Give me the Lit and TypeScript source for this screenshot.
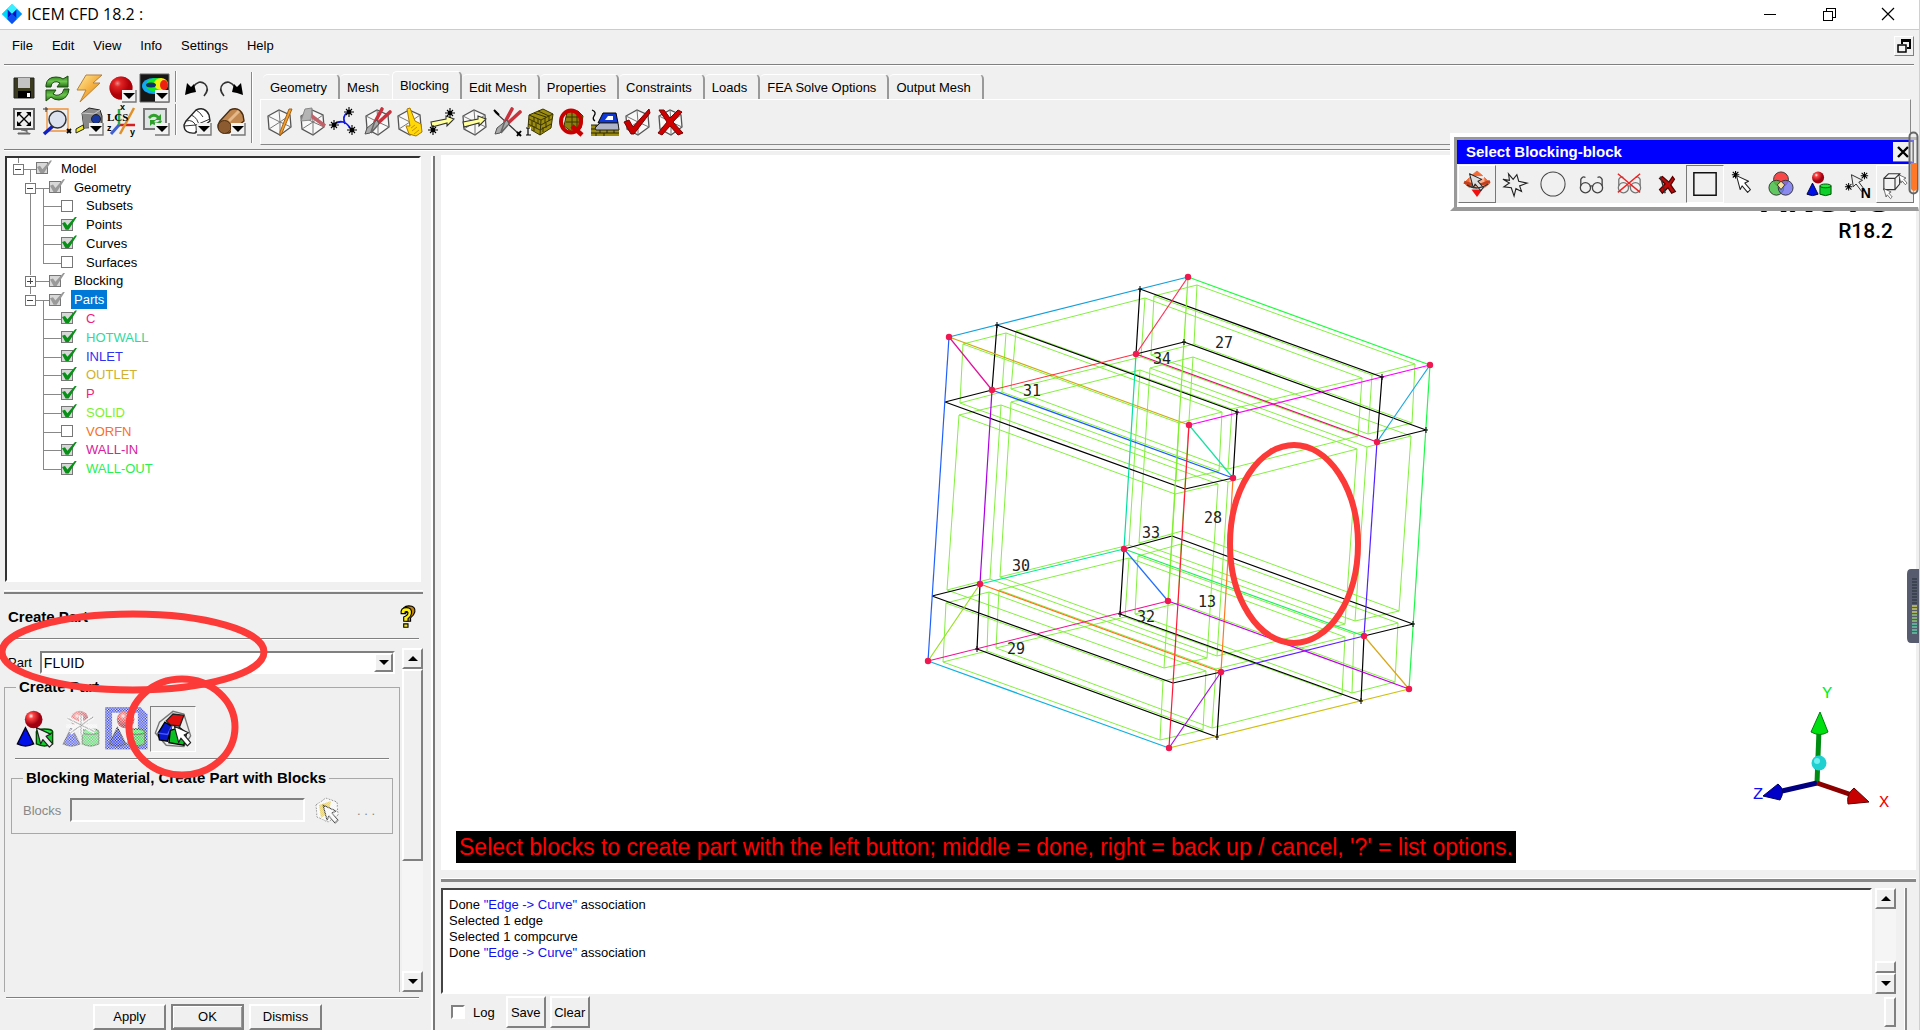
import { LitElement, html, svg, css, nothing, type TemplateResult, type SVGTemplateResult } from "lit";
import { customElement, property, state } from "lit/decorators.js";
import { classMap } from "lit/directives/class-map.js";

type Art = SVGTemplateResult;

/* ---------- shared icon fragments (28 x 28 space) ---------- */

const hexMesh = svg`
  <path d="M3 8 14 2 25 7 26 19 15 27 4 21Z" fill="#f8f8f8" stroke="#555" stroke-width="1.3"/>
  <path d="M3 8 15 14 25 7M14 2 15 14 15 27M4 21 15 14 26 19" fill="none" stroke="#777" stroke-width="1"/>`;

const drop = svg`
  <path d="M14 16H28V28H14Z" fill="#f2f2f2"/>
  <path d="M28 16V28H14" fill="none" stroke="#777" stroke-width="1.4"/>
  <path d="M15 19H27L21 25Z" fill="#000"/>`;

const star = (x: number, y: number) => svg`
  <path d="M${x - 5} ${y}H${x + 5}M${x} ${y - 5}V${y + 5}M${x - 3} ${y - 3}L${x + 3} ${y + 3}M${x + 3} ${y - 3}L${x - 3} ${y + 3}" stroke="#000" stroke-width="1.1"/>
  <circle cx=${x} cy=${y} r="2.2" fill="#000"/>`;

const pointer = (x: number, y: number, fill = "#fff", k = 1) => svg`
  <path transform="translate(${x} ${y}) scale(${k})" d="M0 0 13 6 9 8 15 15 12 18 6 11 4 15Z" fill=${fill} stroke="#222" stroke-width="1.1" stroke-linejoin="round"/>`;

const pliers = svg`
  <path d="M19 1 12 14M27 4 14 16" stroke="#c8323c" stroke-width="3.6" stroke-linecap="round"/>
  <path d="M14 12 4 20 2 26 7 25 16 16Z" fill="#aaa" stroke="#555"/>
  <path d="M12 13 8 24M15 17 8 25" stroke="#666" stroke-width="1.5"/>`;

const yellowArrow = (y: number) => svg`
  <path d="M3 ${y}L18 ${y - 3}V${y - 6}L26 ${y - 3}L19 ${y + 4}V${y + 1}L4 ${y + 5}Z" fill="#ffff9c" stroke="#333" stroke-width="1.1"/>`;

const brick = svg`
  <path d="M3 7 17 1 27 6 25 20 14 27 2 20Z" fill="#9c8c10" stroke="#3a3400"/>
  <path d="M3 7 15 12 27 6M15 12 14 27M3 11 15 17 26 11M2 16 14 22 25 16M8 9V14M12 11V16M6 13V18M10 15V20M8 18V23M19 10V15M23 8V13M20 15V20M17 19V24M8 5 20 9M12 3 23 8" stroke="#3a3400" stroke-width="1" fill="none"/>`;

const shapes = svg`
  <circle cx="13" cy="7" r="6.5" fill="url(#ball)"/>
  <path d="M7 13 1 25Q7 28 13 25Z" fill="#0010e8" stroke="#002"/>
  <path d="M15 16V25Q21 28 27 25V16" fill="#0ccf2a" stroke="#040"/>
  <ellipse cx="21" cy="16" rx="6" ry="2" fill="#18f038" stroke="#040"/>`;

const defs = svg`<defs>
  <radialGradient id="ball" cx="35%" cy="30%"><stop offset="0" stop-color="#fff"/><stop offset=".3" stop-color="#f44"/><stop offset="1" stop-color="#a00010"/></radialGradient>
  <linearGradient id="gold" x2="1" y2="1"><stop offset="0" stop-color="#fff0a0"/><stop offset=".5" stop-color="#f4b040"/><stop offset="1" stop-color="#d08020"/></linearGradient>
  <linearGradient id="leaf" x2="0" y2="1"><stop offset="0" stop-color="#2c7c1c"/><stop offset=".5" stop-color="#6cc84c"/><stop offset="1" stop-color="#246c18"/></linearGradient>
  <pattern id="dots" width="2" height="2" patternUnits="userSpaceOnUse"><path d="M0 0h1v1h-1zM1 1h1v1h-1z" fill="#f0f0f0"/></pattern>
</defs>`;

const glasses = svg`
  <circle cx="8" cy="18" r="5.5"/><circle cx="21" cy="18" r="5.5"/>
  <path d="M13 17Q14.5 15 16 17M3 16 3 9Q5 5 8 7M26 16 26 9Q24 5 21 7"/>`;

const icons: Record<string, Art> = {
  save: svg`<path d="M4 4H24V24H4Z" fill="#3b3b20" stroke="#222"/><path d="M8 4H20V14H8Z" fill="#c4c4c4"/><path d="M8 17H21V24H8Z" fill="#000"/><path d="M17 19H20V23H17Z" fill="#fff"/>`,
  refresh: svg`<path d="M3 11Q4 3 13 3 18 3 20 5L25 2V13H14L17 9Q14 7 11 8 8 9 8 13H3Z" fill="url(#leaf)" stroke="#1c4c10"/><path d="M26 15Q25 25 16 26 11 26 8 23L3 27V16H13L10 20Q13 22 16 21 20 20 21 15Z" fill="url(#leaf)" stroke="#1c4c10"/>`,
  bolt: svg`<path d="M11 1 27 1 18 9 25 9 5 28 11 16 2 16Z" fill="url(#gold)" stroke="#b8813a"/>`,
  sphere: svg`<circle cx="13" cy="14" r="11.5" fill="url(#ball)"/><circle cx="13" cy="14" r="11.5" fill="#c00000" opacity=".45"/>${drop}`,
  contour: svg`<path d="M-1 0H28V28H-1Z" fill="#161616" stroke="#666"/><ellipse cx="13" cy="12" rx="12" ry="8" fill="#10a8f0"/><ellipse cx="16" cy="11" rx="11" ry="7" fill="#10e820"/><ellipse cx="20" cy="10" rx="7" ry="6" fill="#f0f010"/><ellipse cx="23" cy="11" rx="4" ry="5" fill="#f02010"/><ellipse cx="10" cy="11" rx="5" ry="2.5" fill="#08306c"/>${drop}`,
  undo: svg`<path d="M10 13Q16 5 22 10 27 15 21 22" fill="none" stroke="#333" stroke-width="1.6"/><path d="M2 21 4 9 8 13 11 10 13 18 8 19Z" fill="#000"/>`,
  redo: svg`<path d="M18 13Q12 5 6 10 1 15 7 22" fill="none" stroke="#333" stroke-width="1.6"/><path d="M26 21 24 9 20 13 17 10 15 18 20 19Z" fill="#000"/>`,
  fit: svg`<path d="M4 2H24V22H4Z" fill="#eee" stroke="#666" stroke-width="2"/><path d="M11 23H17V26H8V27H20V26" stroke="#666" fill="#777"/><path d="M9 7 19 17M19 7 9 17" stroke="#000" stroke-width="1.4"/><path d="M7 5H12L7 10ZM21 5V10L16 5ZM7 19V14L12 19ZM21 19H16L21 14Z" fill="#000"/>`,
  zoom: svg`<path d="M4 2H25V24H4Z" fill="none" stroke="#f09038" stroke-width="1.3"/><path d="M0 2H5M3 0V5" stroke="#333"/><path d="M10 19 1 27" stroke="#1020c0" stroke-width="3.5"/><circle cx="14.5" cy="12.5" r="8.5" fill="#dde2f0" stroke="#333" stroke-width="1.5"/><path d="M24 22 28 26M28 22 24 26" stroke="#000" stroke-width="1.8"/>`,
  measure: svg`<path d="M7 6 14 1 25 3 27 9V20L9 21Z" fill="#8c8c8c" stroke="#222"/><path d="M7 6 19 7 19 20 9 21Z" fill="#888"/><path d="M7 6 19 7 25 3" fill="none" stroke="#ccc"/><circle cx="21" cy="12" r="4.5" fill="#1838a0" stroke="#222"/><path d="M8 18 9 22 1 26V22Z" fill="#f0e820" stroke="#222"/>${drop}`,
  lcs: svg`<path d="M11 18 27 18" stroke-width="2.5" stroke="#d42020"/><path d="M11 2V18" stroke="#28b040" stroke-width="2.5"/><path d="M11 18 3 27" stroke="#4060d0" stroke-width="3"/><path d="M26 1 12 27" stroke="#e09028" stroke-width="2.5"/><text class="lcs" x="-1" y="14">LCS</text><text class="axis" x="12" y="3">x</text><text class="axis" x="22" y="28">y</text><text class="axis" x="-1" y="24">z</text>`,
  display: svg`<path d="M3 2H25V22H3Z" fill="#dfe4e4" stroke="#777" stroke-width="2"/><path d="M7 10Q12 4 18 9L20 7V13H14L16 11Q12 8 9 12ZM21 14Q18 20 11 17L9 19V13H15L13 15Q16 17 19 13Z" fill="#2ca028"/>${drop}`,
  wireCyl: svg`<path d="M3 14 13 3Q22 -1 26 8L27 14 12 26Q1 27 1 18Z" fill="#fff" stroke="#222" stroke-width="1.4"/><path d="M3 14Q10 12 13 19 14 24 12 26M13 3Q17 5 20 10M1 19 13 18 27 12M8 8Q15 10 17 22" fill="none" stroke="#333"/>${drop}`,
  solidCyl: svg`<path d="M3 14 13 3Q22 -1 26 8L27 14 12 26Q1 27 1 18Z" fill="#c08850" stroke="#4a2c10" stroke-width="1.4"/><ellipse cx="7.5" cy="20" rx="6.5" ry="6.5" fill="#8c5c30" stroke="#4a2c10"/><path d="M12 14 22 4" stroke="#e4b888" stroke-width="3"/>${drop}`,

  createBlock: svg`${hexMesh}<path d="M27 1 17 25 15 28 15 24 24 1Z" fill="#f0a030" stroke="#a86010"/>`,
  splitBlock: svg`${hexMesh}<path d="M11 6 27 18" stroke="#c06068" stroke-width="3.5"/><path d="M7 1 14 0 13 12 3 13Z" fill="#b4b4b4" stroke="#888"/>`,
  mergeVertices: svg`<path d="M17 5Q12 8 15 16M4 16Q14 10 20 20" fill="none" stroke="#1018e0" stroke-width="1.8"/>${star(19, 4)}${star(4, 17)}${star(22, 22)}`,
  editBlock: svg`${hexMesh}${pliers}`,
  associate: svg`${hexMesh}<path d="M12 1 15 0 20 13 26 16 27 24 21 28 14 26 11 18 15 18Z" fill="#ffd808" stroke="#a87800"/><path d="M16 20 20 17M17 23 22 19M19 26 24 22" stroke="#c89000"/>`,
  moveVertex: svg`${yellowArrow(14)}${star(22, 5)}${star(5, 22)}`,
  transform: svg`${hexMesh}${yellowArrow(14)}`,
  editEdge: svg`<path d="M2 4 26 26" stroke="#333" stroke-width="1.2"/>${pliers}<path d="M1 2 6 7M24 24 28 28M28 23 24 28" stroke="#000" stroke-width="2"/>`,
  preMesh: svg`${brick}<path d="M0 19H5V28H0Z" fill="#f0f0f0"/><path d="M0 20H4M2 20V27M0 27H5" stroke="#000" stroke-width="1.2"/>`,
  quality: svg`<path d="M9 4 20 3 25 8 23 20 14 24 6 18Z" fill="#8c8010" stroke="#3a3400"/><path d="M8 9 24 9M8 14 24 14M14 4V22M19 4V20" stroke="#3a3400"/><ellipse cx="13" cy="13.5" rx="10" ry="11" fill="none" stroke="#c80000" stroke-width="4"/><path d="M14 18 24 27" stroke="#c80000" stroke-width="4.5"/>`,
  smooth: svg`<path d="M0 17H28V28H0Z" fill="#9c8c10"/><path d="M0 17H28M0 21H28M0 25H28M5 17V21M12 17V21M19 17V21M9 21V25M16 21V25M23 21V25M5 25V28M13 25V28" stroke="#2a2600"/><path d="M1 2Q6 4 3 8 1 11 4 13" fill="none" stroke="#000" stroke-width="1.3"/><path d="M7 15 12 5H25L27 15Z" fill="#1038d8" stroke="#000"/><path d="M14 12 17 8H22V12Z" fill="#fff"/><path d="M4 20 9 15H27L28 22H5Z" fill="#b0b4c8" stroke="#222"/>`,
  check: svg`${hexMesh}<path d="M1 14 6 12 10 19 26 1 27 5 11 26 8 26Z" fill="#c80000" stroke="#700"/>`,
  remove: svg`${hexMesh}<path d="M3 2 8 2 14 10 22 2 26 4 17 14 27 25 22 27 14 18 6 27 2 25 11 14Z" fill="#d00000" stroke="#700"/>`,

  pan: svg`<path d="M14 0 20 5H8ZM22 7 28 13 22 18ZM6 7V18L0 13Z" fill="#f26a35" stroke="#f26a35"/><path d="M6 8H22V18H6Z" fill="#f8b090"/><path d="M8 20H20L14 28Z" fill="#f01010"/><path d="M0 12Q14 18 28 11" stroke="#c04020" stroke-width="3" fill="none"/>${pointer(6, 3, "#ddd")}<path d="M3 15Q14 22 26 14" stroke="#333" fill="none" stroke-width="1.6"/>`,
  polygon: svg`<path d="M7 3 12 9 16 4 18 11 27 13 19 16 21 22 15 19 13 27 10 18 2 17 8 13 1 9 8 10Z" fill="none" stroke="#222" stroke-width="1.2"/>`,
  circle: svg`<circle cx="14" cy="14" r="13" fill="none" stroke="#444" stroke-width="1.1"/>`,
  all: svg`<g fill="none" stroke="#444" stroke-width="1.4">${glasses}</g>`,
  none: svg`<g fill="none" stroke="#777" stroke-width="1.4">${glasses}</g><path d="M2 3 26 23M26 3 2 23" stroke="#f02020" stroke-width="1.5"/>`,
  cancel: svg`<path d="M9 6 16 12 20 6 22 9 18 15 23 22 19 24 15 18 9 24 6 20 12 14 6 8Z" fill="#c00808" stroke="#500" stroke-width="1.4"/><path d="M7 6 12 24" stroke="#333" stroke-width="1.6"/>`,
  box: svg`<path d="M2 2H26V26H2Z" fill="none" stroke="#111" stroke-width="1.6"/>`,
  single: svg`<path d="M2 4H10M6 0V8M3 1 9 7M9 1 3 7" stroke="#000" stroke-width="1.2"/>${pointer(7, 5)}`,
  parts: svg`<circle cx="14" cy="9" r="8" fill="#f84848" stroke="#333"/><circle cx="9" cy="18" r="8" fill="#48c048" fill-opacity=".85" stroke="#333"/><circle cx="19" cy="18" r="8" fill="#7070f0" fill-opacity=".8" stroke="#333"/><path d="M14 11 18 15 14 20 10 15Z" fill="#f8e0a0" stroke="#333"/>`,
  entity: shapes,
  vertexN: svg`<path d="M18 5H26M22 1V9M19 2 25 8M25 2 19 8M1 17H9M5 13V21M2 14 8 20M8 14 2 20" stroke="#000" stroke-width="1.1"/><path d="M8 4 20 10 16 12 22 20 19 22 13 14 10 17Z" fill="#eee" stroke="#222"/><text class="big-n" x="18" y="29">N</text>`,
  corners: svg`<path d="M2 8H14V20H2ZM2 8 7 3H19L14 8M19 3V14L14 20" fill="#f4f4f4" stroke="#333" stroke-width="1.2"/>${pointer(18, 4, "#fff", 0.6)}${pointer(2, 19, "#fff", 0.6)}`,

  byEntities: svg`${shapes}${pointer(15, 13, "#eee", 0.8)}`,
  byAssembly: svg`<g opacity=".75">${shapes}</g><path d="M4 6 24 16M23 5 6 17M14 4V18M3 12H26" stroke="#fff" stroke-width="3"/><path d="M4 6 24 16M23 5 6 17M14 4V18" stroke="#888" stroke-width=".8"/><path d="M0 0H28V28H0Z" fill="url(#dots)"/>`,
  assembly: svg`<path d="M-2 -2H24L29 3V29H-2Z" fill="#2838e0"/><path d="M3 2H22V24H3Z" fill="#f4f4f4"/><g>${shapes}</g><path d="M-2 -2H29V29H-2Z" fill="url(#dots)"/>`,
  byBlocks: svg`<path d="M1 17 4 9 14 1 22 3 27 19 22 27 9 26Z" fill="#eee" stroke="#777"/><path d="M9 8 14 3 22 4 19 12 12 11Z" fill="#e01010" stroke="#222"/><path d="M3 17 8 9 13 12 10 23 4 22Z" fill="#0818c8" stroke="#000"/><path d="M3 17 10 18 13 12" fill="none" stroke="#4858ff"/><path d="M12 15 19 13 24 17 22 26 11 24Z" fill="#08c020" stroke="#000"/>${pointer(15, 12, "#fff", 0.8)}`,
  pickBlocks: svg`<g opacity=".8"><path d="M3 9 13 2 24 6 25 19 15 26 4 21Z" fill="#fff" stroke="#777" stroke-dasharray="2 1"/><path d="M6 9 18 5 16 16 8 22Z" fill="#e8d060"/>${pointer(10, 9)}</g><path d="M0 0H28V28H0Z" fill="url(#dots)" opacity=".5"/>`,
  help: svg`<path d="M8 9Q7 1 15 1 23 1 22 8 21 12 17 15V19H12V13Q17 11 17 8 16 5 13 6 12 7 13 9Z" fill="#c08010" stroke="#000" stroke-width="1.3"/><path d="M6 10Q5 3 12 3 19 3 18 10 18 13 14 16V19H9V14Q14 12 14 9 13 7 11 8 10 8 11 10Z" fill="#fff010" stroke="#000" stroke-width="1.3"/><path d="M9 22H14V26H9Z" fill="#f0e010" stroke="#000" stroke-width="1.3"/>`,
  logo: svg`<path d="M14 0 28 14 14 28 0 14Z" fill="#00c8ff"/><path d="M14 0 21 7 14 14 7 7Z" fill="#38f0ff"/><path d="M7 7 14 14 7 21 0 14Z" fill="#00d8f8"/><path d="M14 14 21 21 14 28 7 21Z" fill="#1050f0"/><path d="M21 7 28 14 21 21 14 14Z" fill="#0090f8"/><path d="M8 8V20L14 14ZM20 8V20L14 14Z" fill="#0010c8"/>`,
};

const icon = (name: string, size: string) => html`<svg class=${"ico " + size} viewBox="0 0 28 28" aria-hidden="true">${defs}${icons[name]}</svg>`;

/* ---------- wireframe geometry ---------- */

type P = [number, number];
/* Each face is a 4 x 4 lattice of vertices, rows from top to bottom. */
const nearFace: P[][] = [
  [[949, 337], [997, 325], [1140, 289], [1188, 277]],
  [[945, 402], [992, 390], [1136, 354], [1184, 342]],
  [[932, 596], [980, 584], [1124, 549], [1172, 536]],
  [[928, 661], [977, 649], [1120, 614], [1168, 601]],
];
const farFace: P[][] = [
  [[1189, 425], [1237, 412], [1382, 377], [1430, 365]],
  [[1185, 489], [1233, 478], [1377, 442], [1426, 430]],
  [[1173, 683], [1221, 672], [1364, 636], [1413, 624]],
  [[1169, 748], [1217, 737], [1361, 701], [1409, 689]],
];

const seg = (a: P, b: P) => `M${a[0]} ${a[1]}L${b[0]} ${b[1]}`;

/* Outline of every block, pulled in toward the block's own centre. */
function shrunkBlocks(k: number): string {
  let d = "";
  for (let r = 0; r < 3; r++)
    for (let c = 0; c < 3; c++) {
      const ring = (f: P[][]): P[] => [f[r][c], f[r][c + 1], f[r + 1][c + 1], f[r + 1][c]];
      const pts = [...ring(nearFace), ...ring(farFace)];
      const cx = pts.reduce((s, p) => s + p[0], 0) / 8;
      const cy = pts.reduce((s, p) => s + p[1], 0) / 8;
      const q = pts.map(([x, y]): P => [Math.round(cx + k * (x - cx)), Math.round(cy + k * (y - cy))]);
      for (let i = 0; i < 4; i++) {
        const j = (i + 1) % 4;
        d += seg(q[i], q[j]) + seg(q[i + 4], q[j + 4]) + seg(q[i], q[i + 4]);
      }
    }
  return d;
}

const N = nearFace, F = farFace;
const blackEdges = [
  seg(N[0][1], N[1][1]), seg(N[0][2], N[1][2]), seg(N[1][0], N[1][1]), seg(N[1][2], N[1][3]),
  seg(N[2][0], N[2][1]), seg(N[2][2], N[2][3]), seg(N[2][1], N[3][1]), seg(N[2][2], N[3][2]),
  seg(F[0][1], F[1][1]), seg(F[0][2], F[1][2]), seg(F[1][0], F[1][1]), seg(F[1][2], F[1][3]),
  seg(F[2][0], F[2][1]), seg(F[2][2], F[2][3]), seg(F[2][1], F[3][1]), seg(F[2][2], F[3][2]),
  seg(N[0][1], F[0][1]), seg(N[0][2], F[0][2]), seg(N[1][0], F[1][0]), seg(N[1][3], F[1][3]),
  seg(N[2][0], F[2][0]), seg(N[2][3], F[2][3]), seg(N[3][1], F[3][1]), seg(N[3][2], F[3][2]),
].join("");

/* Small cross ticks where a black edge ends on the outer frame. */
const ticks = [N[0][1], N[0][2], N[1][3], N[3][1], N[3][2], F[0][1], F[0][2], F[1][3], F[2][3], F[3][1], F[3][2]]
  .map(([x, y]) => `M${x - 2} ${y}h4M${x} ${y - 3}v6`).join("");

const curves: [P, P, string][] = [
  [N[0][0], N[0][3], "#12a0dc"], [N[0][3], F[0][3], "#18ff38"], [F[0][3], F[0][0], "#ff00ff"], [N[0][0], F[0][0], "#d0a810"],
  [N[0][0], N[1][1], "#e0109c"], [N[0][3], N[1][2], "#ff3058"], [F[0][3], F[1][2], "#18a8e0"], [F[0][0], F[1][1], "#18e0a0"],
  [N[1][1], N[1][2], "#ff3040"], [N[1][2], F[1][2], "#e0106c"], [N[1][1], F[1][1], "#1858ff"],
  [N[0][0], N[3][0], "#2060f8"], [N[1][1], N[2][1], "#a800e0"], [N[1][2], N[2][2], "#00e0a0"], [N[0][3], N[3][3], "#80f030"],
  [F[0][0], F[3][0], "#ff1838"], [F[1][1], F[2][1], "#ff7820"], [F[1][2], F[2][2], "#5020ff"], [F[0][3], F[3][3], "#20f848"],
  [N[2][1], N[2][2], "#08e898"], [N[2][2], F[2][2], "#18f060"], [N[2][1], F[2][1], "#ff7010"], [F[2][1], F[2][2], "#5c20ff"],
  [N[3][0], N[2][1], "#98e020"], [N[3][3], N[2][2], "#2070ff"], [F[3][3], F[2][2], "#d8a818"], [F[3][0], F[2][1], "#a810e8"],
  [N[3][0], N[3][3], "#f01098"], [N[3][3], F[3][3], "#c000e8"], [F[3][3], F[3][0], "#d0c010"], [N[3][0], F[3][0], "#10b0e0"],
];

const points: P[] = [N[0][0], N[0][3], F[0][0], F[0][3], N[3][0], N[3][3], F[3][0], F[3][3], N[1][1], N[1][2], N[2][1], N[2][2], F[1][1], F[1][2], F[2][1], F[2][2]];

const blockLabels: [string, number, number][] = [
  ["27", 1215, 348], ["34", 1153, 364], ["31", 1023, 396], ["33", 1142, 538], ["30", 1012, 571],
  ["28", 1204, 523], ["13", 1198, 607], ["32", 1137, 622], ["29", 1007, 654],
];

/* ---------- tree data ---------- */

interface Node { label: string; level: number; mark: "on" | "off" | "partial"; expander?: "+" | "-"; color?: string; selected?: boolean; last?: boolean }
const nodes: Node[] = [
  { label: "Model", level: 0, mark: "partial", expander: "-" },
  { label: "Geometry", level: 1, mark: "partial", expander: "-" },
  { label: "Subsets", level: 2, mark: "off" },
  { label: "Points", level: 2, mark: "on" },
  { label: "Curves", level: 2, mark: "on" },
  { label: "Surfaces", level: 2, mark: "off", last: true },
  { label: "Blocking", level: 1, mark: "partial", expander: "+" },
  { label: "Parts", level: 1, mark: "partial", expander: "-", selected: true, last: true },
  { label: "C", level: 2, mark: "on", color: "#f0207c" },
  { label: "HOTWALL", level: 2, mark: "on", color: "#30d8a0" },
  { label: "INLET", level: 2, mark: "on", color: "#3030f0" },
  { label: "OUTLET", level: 2, mark: "on", color: "#d0b030" },
  { label: "P", level: 2, mark: "on", color: "#f0207c" },
  { label: "SOLID", level: 2, mark: "on", color: "#80f030" },
  { label: "VORFN", level: 2, mark: "off", color: "#f87028" },
  { label: "WALL-IN", level: 2, mark: "on", color: "#d820a0" },
  { label: "WALL-OUT", level: 2, mark: "on", color: "#28f050", last: true },
];

const base = css`
  *, *::before, *::after { box-sizing: border-box; }
  button, input, select { font: inherit; color: inherit; margin: 0; padding: 0; border-radius: 0; }
  button { background: none; border: 0; }
  .ico { display: block; flex: none; overflow: visible; }
  .s20 { width: 20px; height: 20px; }
  .s24 { width: 24px; height: 24px; }
  .s26 { width: 26px; height: 26px; }
  .s28 { width: 28px; height: 28px; }
  .s38 { width: 38px; height: 38px; }
  .lcs { font: bold 11px "Liberation Serif", serif; }
  .axis { font: bold 9px "Liberation Sans", sans-serif; }
  .big-n { font: bold 15px "Liberation Sans", sans-serif; }
  .raised { background: #f0f0f0; border: 2px solid; border-color: #fff #808080 #808080 #fff; }
  .sunken { border: 2px solid; border-color: #808080 #fff #fff #808080; }
  .rule { flex: none; height: 2px; background: #808080; border-bottom: 1px solid #fff; }
`;

/* Vertical scroll bar: two arrow buttons and a thumb in a track. */
@customElement("scroll-bar")
class ScrollBar extends LitElement {
  @property({ type: Number }) before = 0;
  @property({ type: Number }) thumb = 50;
  @property({ type: Number }) after = 50;
  static styles = [base, css`
    :host { display: flex; flex-direction: column; flex: none; width: 21px; background: #f5f5f5; }
    button { height: 21px; flex: none; display: grid; place-items: center; }
    .up, .down { width: 0; height: 0; border: 5px solid transparent; }
    .up { border-top: 0; border-bottom-color: #000; }
    .down { border-bottom: 0; border-top-color: #000; }
    .track { flex: 1; display: flex; flex-direction: column; min-height: 0; }
    .thumb { min-height: 8px; }
  `];
  render() {
    return html`
      <button class="raised" aria-label="Scroll up"><span class="up"></span></button>
      <div class="track">
        <div style="flex:${this.before}"></div>
        <div class="thumb raised" style="flex:${this.thumb}"></div>
        <div style="flex:${this.after}"></div>
      </div>
      <button class="raised" aria-label="Scroll down"><span class="down"></span></button>`;
  }
}

@customElement("model-tree")
class ModelTree extends LitElement {
  static styles = [base, css`
    :host { display: block; min-height: 0; overflow: hidden; background: #fff; border: 2px solid; border-color: #333 #fff #fff #333; }
    .list { list-style: none; margin: 1px 0 0; padding: 0; height: 319px; display: grid; grid-template-rows: repeat(17, minmax(0, 1fr)); }
    .row { display: flex; align-items: center; min-height: 0; }
    .guides { flex: none; height: 19px; overflow: visible; }
    .label { display: flex; align-items: center; }
    .text { margin-left: 11px; padding: 1px 2px; line-height: 15px; }
    .selected { background: #0078d7; color: #fff; outline: 1px solid #0078d7; }
    .tick { appearance: none; flex: none; width: 12px; height: 12px; border: 1px solid #777; background: #fff; position: relative; }
    .on, .partial { background: #d8d8d8; }
    .on::before, .partial::before {
      content: ""; position: absolute; left: 0; top: -3px; width: 15px; height: 13px; background: #089018;
      clip-path: polygon(0 50%, 20% 42%, 36% 68%, 88% 0, 100% 0, 44% 100%, 24% 100%);
    }
    .partial::before { background: #999; }
  `];
  private guides(n: Node) {
    const width = [29, 42, 54][n.level];
    const ex = [11, 23][n.level] ?? 36;
    const lines = n.level === 0 ? "M11 -2V4M17 10H29M23 10V19"
      : n.level === 1 ? `M29 10H42M23 0V4${n.last ? "" : "M23 16V20"}${n.expander === "-" ? "M36 10V19" : ""}`
      : `M36 -1V${n.last ? 10 : 19}M36 10H54`;
    const inGeometry = n.level === 2 && nodes.indexOf(n) < 6;
    return html`<svg class="guides" width=${width} height="19" viewBox="0 0 ${width} 19" aria-hidden="true" shape-rendering="crispEdges">
      <path d=${lines + (inGeometry ? "M23 -1V20" : "")} stroke="#888" fill="none"></path>
      ${n.expander ? svg`<path d="M${ex - 5} 5h10v10h-10z" fill="#fff" stroke="#777"/><path d="M${ex - 3} 10h6${n.expander === "+" ? "m-3 -3v6" : ""}" stroke="#444"/>` : nothing}
    </svg>`;
  }
  render() {
    return html`<ul class="list">${nodes.map((n) => html`
      <li class="row">${this.guides(n)}
        <label class="label"><input type="checkbox" class="tick ${n.mark}" .checked=${n.mark !== "off"}>
          <span class=${classMap({ text: true, selected: !!n.selected })} style=${n.color ? `color:${n.color}` : nothing}>${n.label}</span></label>
      </li>`)}</ul>`;
  }
}

@customElement("part-form")
class PartForm extends LitElement {
  static styles = [base, css`
    :host { display: flex; flex-direction: column; min-height: 0; padding: 8px 10px 0 4px; }
    .top-edge { flex: none; height: 4px; border-top: 1px solid #fff; border-bottom: 2px solid #808080; background: #f0f0f0; }
    .head { display: flex; align-items: center; justify-content: space-between; height: 44px; padding: 2px 3px 0 4px; }
    .title { margin: 0; font-size: 15px; line-height: 16px; font-weight: bold; }
    .inset-rule { margin: 0 4px; }
    .body { display: flex; flex: 1; min-height: 0; margin-top: 8px; gap: 2px; }
    .content { flex: 1; min-width: 0; display: flex; flex-direction: column; overflow: hidden; }
    .part { display: flex; align-items: center; gap: 8px; margin-top: 3px; padding: 0 5px 0 4px; }
    .combo { display: flex; flex: 1; height: 23px; background: #fff; }
    .select { appearance: none; flex: 1; border: 0; background: #fff; padding-left: 2px; font-size: 14px; outline: 0; }
    .arrow { width: 19px; display: grid; place-items: center; pointer-events: none; }
    .arrow::before { content: ""; border: 5px solid transparent; border-top-color: #000; border-bottom: 0; }
    .group { min-width: 0; border: 1px solid #a8a8a8; margin: 5px 0 0 0; padding: 0; flex: 1; border-bottom: 0; }
    .legend { margin-left: 11px; padding: 0 3px; font-size: 15px; line-height: 16px; font-weight: bold; }
    .modes { display: flex; margin: 11px 0 6px 7px; }
    .mode { width: 46px; height: 46px; display: grid; place-items: center; border: 1px solid transparent; }
    .pressed { border-color: #808080 #fff #fff #808080; }
    .mode-rule { margin: 0 10px; }
    .inner { min-width: 0; border: 1px solid #a8a8a8; margin: 10px 6px 0; padding: 10px 11px 9px; }
    .inner .legend { margin-left: 0; }
    .blocks { display: flex; align-items: center; color: #888; }
    .field { flex: 1; min-width: 0; height: 24px; margin: 0 8px 0 9px; background: #f0f0f0; }
    .dots { margin-left: 16px; width: 24px; text-align: left; }
    .actions { display: flex; gap: 5px; padding: 5px 0 0 89px; flex: none; }
    .foot-rule { margin: 5px 4px 0 2px; }
    .action { width: 73px; height: 26px; font-size: 13px; line-height: 16px; }
    .default { border-color: #808080; box-shadow: inset 1px 1px #fff, inset -1px -1px #999; }
  `];
  render() {
    const modes: [string, string][] = [
      ["byEntities", "Create part by selection"], ["byAssembly", "Create part by coordinates"],
      ["assembly", "Create assembly"], ["byBlocks", "Create part with blocks"],
    ];
    return html`
      <div class="top-edge"></div>
      <div class="head"><h2 class="title">Create Part</h2><button aria-label="Help">${icon("help", "s24")}</button></div>
      <div class="rule inset-rule"></div>
      <div class="body">
        <div class="content">
          <div class="part"><label for="part">Part</label>
            <div class="combo sunken">
              <select class="select" id="part"><option>FLUID</option></select><span class="arrow raised"></span>
            </div>
          </div>
          <fieldset class="group"><legend class="legend">Create Part</legend>
            <div class="modes">${modes.map(([id, name]) => html`
              <button class=${classMap({ mode: true, pressed: id === "byBlocks" })} aria-label=${name}>${icon(id, "s38")}</button>`)}</div>
            <div class="rule mode-rule"></div>
            <fieldset class="inner"><legend class="legend">Blocking Material, Create Part with Blocks</legend>
              <div class="blocks"><label for="blocks">Blocks</label>
                <input class="field sunken" id="blocks" type="text" disabled>
                <button aria-label="Select blocks">${icon("pickBlocks", "s28")}</button><span class="dots">. . .</span>
              </div>
            </fieldset>
          </fieldset>
        </div>
        <scroll-bar .before=${0} .thumb=${190} .after=${112}></scroll-bar>
      </div>
      <div class="rule foot-rule"></div>
      <div class="actions">
        <button class="action raised">Apply</button>
        <button class="action raised default">OK</button>
        <button class="action raised">Dismiss</button>
      </div>`;
  }
}

@customElement("model-view")
class ModelView extends LitElement {
  static styles = [base, css`
    :host { display: block; position: relative; min-height: 0; overflow: hidden; background: #fff; }
    .scene { position: absolute; inset: 0; width: 100%; height: 100%; }
    .num { font: 15px "DejaVu Sans Mono", monospace; fill: #222; }
    .ax { font: 17px "Liberation Mono", monospace; }
    .brand { font: bold 38px "Liberation Sans", sans-serif; }
    .version { font: 500 21px Roboto, sans-serif; }
    .prompt { position: absolute; left: 15px; bottom: 7px; margin: 0; padding: 0 3px; background: #000; color: #f00; font-size: 23px; line-height: 32px; white-space: nowrap; }
  `];
  render() {
    return html`
      <svg class="scene" viewBox="441 155 1475 715" role="img" aria-label="Blocking wireframe">
        ${defs}
        <path d=${shrunkBlocks(0.9)} stroke="#84f040" fill="none"></path>
        <path d=${blackEdges} stroke="#000" stroke-width="1.2" fill="none"></path>
        ${curves.map(([a, b, c]) => svg`<path d=${seg(a, b)} stroke=${c} stroke-width="1.2"/>`)}
        <path d=${ticks} stroke="#000" fill="none"></path>
        ${points.map(([x, y]) => svg`<circle cx=${x} cy=${y} r="3.2" fill="#f01850"/>`)}
        ${blockLabels.map(([t, x, y]) => svg`<text class="num" x=${x} y=${y}>${t}</text>`)}
        <path d="M1817 783 1819 730" stroke="#008c10" stroke-width="5"/>
        <path d="M1820 712 1828 732Q1820 737 1811 732Z" fill="#00e010" stroke="#008010"/>
        <path d="M1817 783 1782 791" stroke="#000080" stroke-width="5"/>
        <path d="M1763 796 1778 784Q1786 790 1780 800Z" fill="#0000c8" stroke="#000060"/>
        <path d="M1817 783 1852 795" stroke="#8c0000" stroke-width="5"/>
        <path d="M1869 802 1854 788Q1846 794 1848 804Z" fill="#c80000" stroke="#600000"/>
        <circle cx="1819" cy="763" r="7.5" fill="#20d0d0"/><circle cx="1817" cy="761" r="3" fill="#70f0f0"/>
        <text class="ax" x="1822" y="698" fill="#00f010">Y</text>
        <text class="ax" x="1879" y="807" fill="#f00000">X</text>
        <text class="ax" x="1753" y="799" fill="#1010f0">Z</text>
        <text class="brand" x="1891" y="212" text-anchor="end">ANSYS</text>
        <text class="version" x="1893" y="238" text-anchor="end">R18.2</text>
      </svg>
      <p class="prompt">Select blocks to create part with the left button; middle = done, right = back up / cancel, '?' = list options.</p>`;
  }
}

@customElement("selection-bar")
class SelectionBar extends LitElement {
  static styles = [base, css`
    :host { display: block; background: #fff; border: 4px solid; border-color: #fff #fff #999 #fff; border-right-width: 1px; }
    .frame { border: 3px solid #999; border-right: 0; border-bottom: 0; padding: 0 4px 3px 0; background: #fff; }
    .caption { display: flex; align-items: center; justify-content: space-between; height: 24px; background: #0000fe; color: #fff; padding: 0 1px 0 9px; }
    .name { margin: 0; font-size: 15px; line-height: 16px; font-weight: bold; }
    .close { width: 20px; height: 20px; background: #f0f0f0; display: grid; place-items: center; border-right: 1px solid #777; border-bottom: 1px solid #777; }
    .tools { display: grid; grid-template-columns: repeat(12, 38px); height: 40px; padding: 1px 0 0 1px; background: #f0f0f0; border-bottom: 1px solid #fff; }
    .tool { display: grid; place-items: center; height: 38px; border: 1px solid transparent; }
    .up { border-color: #fff #777 #777 #fff; }
    .down { border-color: #777 #fff #fff #777; }
  `];
  render() {
    const tools: [string, string][] = [
      ["pan", "Toggle dynamics"], ["polygon", "Select by polygon"], ["circle", "Select by circle"], ["all", "Select all"],
      ["none", "Select all visible"], ["cancel", "Cancel selection"], ["box", "Select by box"], ["single", "Select one"],
      ["parts", "Select by part"], ["entity", "Select by type"], ["vertexN", "Select by vertices"], ["corners", "Select by corners"],
    ];
    return html`<div class="frame">
      <div class="caption"><h2 class="name">Select Blocking-block</h2>
        <button class="close" aria-label="Close selection bar"><svg width="14" height="14" viewBox="0 0 14 14"><path d="M2 2 12 12M12 2 2 12" stroke="#000" stroke-width="2.4"/></svg></button></div>
      <div class="tools">${tools.map(([id, name], i) => html`
        <button class=${classMap({ tool: true, up: i === 0 || i === 11, down: i === 6 })} aria-label=${name}>${icon(id, "s26")}</button>`)}</div>
    </div>`;
  }
}

@customElement("app-root")
class AppRoot extends LitElement {
  @state() private tab = "Blocking";

  static styles = [base, css`
    :host { display: flex; flex-direction: column; position: relative; height: 100vh; overflow: hidden; background: #f0f0f0; color: #000; font: 13px "Liberation Sans", Arial, sans-serif; border-right: 1px solid #d0d0d0; }
    .titlebar { display: flex; align-items: center; height: 30px; padding: 0 4px 2px 2px; gap: 5px; background: #fff; border-bottom: 1px solid #ccc; flex: none; }
    .app-name { margin: 0; flex: 1; font: 16px/22px "Open Sans", sans-serif; }
    .win { width: 54px; height: 26px; display: grid; place-items: center; }
    .menubar { display: flex; align-items: center; height: 34px; padding: 0 5px 2px 3px; flex: none; }
    .menu { padding: 0 10px 0 9px; font-size: 13px; line-height: 16px; }
    .restore { margin-left: auto; width: 20px; height: 20px; display: grid; place-items: center; border-width: 1px; }
    .bar-rule { margin: 0 5px 0 4px; }
    .toolbar { display: flex; height: 83px; flex: none; padding: 5px 8px 4px; }
    .main-tools { display: grid; grid-template-columns: repeat(5, 1fr); grid-template-rows: 33px 33px; width: 163px; }
    .view-tools { display: grid; grid-template-columns: repeat(2, 1fr); grid-template-rows: 33px 33px; width: 68px; }
    .tool { display: grid; place-items: center; }
    .vline { width: 2px; background: #888; border-right: 1px solid #fff; }
    .split { display: grid; grid-template-rows: 31px 31px; gap: 2px; width: 2px; margin: 0 3px 0 4px; }
    .end { margin: 1px 7px 2px 3px; }
    .tabs { flex: 1; min-width: 0; display: flex; flex-direction: column; }
    .strip { display: flex; align-items: flex-end; height: 28px; padding-left: 3px; }
    .tab { height: 25px; padding: 0 11px 0 7px; line-height: 26px; border-top: 1px solid #fff; border-right: 2px solid #999; border-radius: 5px 5px 0 0; white-space: nowrap; }
    .tab.before { border-right-color: transparent; }
    .tab.active { height: 28px; border-left: 1px solid #fff; line-height: 25px; }
    .page { flex: 1; border: 1px solid; border-color: #fff #888 #888 #fff; display: flex; align-items: center; padding-left: 2px; }
    .page-tools { display: grid; grid-template-columns: repeat(13, 1fr); width: 423px; }
    .main { flex: 1; min-height: 0; display: grid; grid-template-columns: 433px 2px minmax(0, 1fr); }
    .side { display: grid; grid-template-rows: minmax(0, 426fr) minmax(0, 447fr); padding-top: 5px; min-height: 0; }
    .tree { margin: 0 12px 0 5px; }
    .sash { background: #777; margin-top: 5px; box-shadow: -2px 0 #fff; }
    .work { display: flex; flex-direction: column; min-height: 0; padding: 4px 0 0 6px; }
    .view { flex: 1; margin-right: 3px; }
    .work-edge { height: 4px; margin: 8px 3px 6px 0; border-bottom: 3px solid #888; border-top: 1px solid #fff; flex: none; }
    .bottom { display: flex; flex: none; height: 142px; }
    .console { flex: 1; min-width: 0; }
    .log-row { display: flex; gap: 3px; height: 106px; }
    .log { flex: 1; background: #fff; border-color: #444 #fff #fff #444; padding: 7px 6px; line-height: 16px; }
    .line { margin: 0; }
    .str { color: #1010f0; }
    .log-tools { display: flex; align-items: center; padding: 1px 0 0 10px; height: 35px; }
    .log-check { appearance: none; width: 14px; height: 14px; background: #fff; }
    .log-label { margin: 0 11px 0 8px; }
    .small { height: 32px; width: 40px; margin-right: 4px; }
    .stub { width: 12px; height: 30px; margin-left: auto; }
    .edge { width: 3px; margin: 0 12px 0 8px; border-left: 1px solid #fff; border-right: 2px solid #888; }
    .selection { position: absolute; right: 0; top: 133px; }
    .meter { position: absolute; right: -1px; top: 569px; }
    .pill { position: absolute; right: 0; top: 131px; }
    .marks { position: absolute; inset: 0; width: 100%; height: 100%; pointer-events: none; }
  `];

  private tool(id: string, name: string): TemplateResult {
    return html`<button class="tool" aria-label=${name}>${icon(id, "s28")}</button>`;
  }

  render() {
    const menus = ["File", "Edit", "View", "Info", "Settings", "Help"];
    const tabs = ["Geometry", "Mesh", "Blocking", "Edit Mesh", "Properties", "Constraints", "Loads", "FEA Solve Options", "Output Mesh"];
    const mainTools: [string, string][] = [
      ["save", "Save project"], ["refresh", "Reload"], ["bolt", "Compute"], ["sphere", "Display style"], ["contour", "Results"],
      ["fit", "Fit window"], ["zoom", "Box zoom"], ["measure", "Measure"], ["lcs", "Local coordinates"], ["display", "Refresh display"],
    ];
    const viewTools: [string, string][] = [["undo", "Undo"], ["redo", "Redo"], ["wireCyl", "Wire frame"], ["solidCyl", "Solid"]];
    const blockTools: [string, string][] = [
      ["createBlock", "Create block"], ["splitBlock", "Split block"], ["mergeVertices", "Merge vertices"], ["editBlock", "Edit block"],
      ["associate", "Associate"], ["moveVertex", "Move vertex"], ["transform", "Transform blocks"], ["editEdge", "Edit edge"],
      ["preMesh", "Pre-mesh parameters"], ["quality", "Pre-mesh quality"], ["smooth", "Pre-mesh smooth"], ["check", "Check blocks"], ["remove", "Delete block"],
    ];
    const active = tabs.indexOf(this.tab);
    return html`
      <header class="titlebar">${icon("logo", "s20")}<h1 class="app-name">ICEM CFD 18.2 :</h1>
        <button class="win" aria-label="Minimize"><svg width="14" height="14" viewBox="0 0 14 14" shape-rendering="crispEdges"><path d="M1 7H13" stroke="#000"/></svg></button>
        <button class="win" aria-label="Restore"><svg width="14" height="14" viewBox="0 0 14 14" shape-rendering="crispEdges"><path d="M1 4H10V13H1ZM4 4V1H13V10H10" fill="none" stroke="#000"/></svg></button>
        <button class="win" aria-label="Close"><svg width="14" height="14" viewBox="0 0 14 14"><path d="M1 1 13 13M13 1 1 13" stroke="#000" stroke-width="1.2"/></svg></button>
      </header>
      <nav class="menubar">${menus.map((m) => html`<button class="menu">${m}</button>`)}
        <button class="restore raised" aria-label="Restore document"><svg width="14" height="14" viewBox="0 0 14 14"><path d="M5 5V1H13V9H10M5 2H13" fill="none" stroke="#000" stroke-width="2"/><path d="M1 6H9V13H1Z" fill="#f0f0f0" stroke="#000" stroke-width="1.5"/></svg></button>
      </nav>
      <div class="rule bar-rule"></div>
      <div class="toolbar">
        <div class="main-tools">${mainTools.map(([i, n]) => this.tool(i, n))}</div>
        <div class="split"><span class="vline"></span><span class="vline"></span></div>
        <div class="view-tools">${viewTools.map(([i, n]) => this.tool(i, n))}</div>
        <div class="vline end"></div>
        <div class="tabs">
          <div class="strip" role="tablist">${tabs.map((t, i) => html`
            <button role="tab" aria-selected=${i === active} class=${classMap({ tab: true, active: i === active, before: i === active - 1 })}
              @click=${() => (this.tab = t)}>${t}</button>`)}</div>
          <div class="page"><div class="page-tools">${blockTools.map(([i, n]) => this.tool(i, n))}</div></div>
        </div>
      </div>
      <div class="rule bar-rule"></div>
      <main class="main">
        <div class="side"><model-tree class="tree"></model-tree><part-form></part-form></div>
        <div class="sash"></div>
        <div class="work">
          <model-view class="view"></model-view>
          <div class="work-edge"></div>
          <div class="bottom">
            <div class="console">
              <div class="log-row">
                <div class="log sunken" role="log">
                  <p class="line">Done <span class="str">"Edge -&gt; Curve"</span> association</p>
                  <p class="line">Selected 1 edge</p>
                  <p class="line">Selected 1 compcurve</p>
                  <p class="line">Done <span class="str">"Edge -&gt; Curve"</span> association</p>
                </div>
                <scroll-bar .before=${55} .thumb=${9} .after=${0}></scroll-bar>
              </div>
              <div class="log-tools">
                <input class="log-check sunken" type="checkbox" id="log"><label class="log-label" for="log">Log</label>
                <button class="small raised">Save</button><button class="small raised">Clear</button>
                <div class="stub raised"></div>
              </div>
            </div>
            <div class="edge"></div>
          </div>
        </div>
      </main>
      <selection-bar class="selection"></selection-bar>
      <svg class="pill" width="11" height="64" viewBox="0 0 11 64" aria-hidden="true"><rect x="1.5" y="1.5" width="8" height="61" rx="4" fill="#ddd" fill-opacity=".5" stroke="#666" stroke-width="2"/><path d="M3 32H9V58Q6 62 3 58Z" fill="#ff7828"/></svg>
      <svg class="meter" width="13" height="74" viewBox="0 0 13 74" aria-hidden="true">
        <path d="M13 0H4Q0 0 0 5V69Q0 74 4 74H13Z" fill="#565c6e"/>
        ${Array.from({ length: 19 }, (_, i) => svg`<path d="M5 ${10 + i * 3}H10" stroke=${i < 9 ? "#363c48" : i < 12 ? "#c8cc60" : i < 15 ? "#90c878" : "#60c8a8"} stroke-width="1.5"/>`)}
      </svg>
      <svg class="marks" aria-hidden="true"><g fill="none" stroke="#fc3a38">
        <ellipse cx="133" cy="652" rx="131" ry="38" stroke-width="7"/>
        <ellipse cx="182" cy="727" rx="53" ry="48" stroke-width="7"/>
        <ellipse cx="1294" cy="544" rx="64" ry="99" stroke-width="6"/>
      </g></svg>`;
  }
}
